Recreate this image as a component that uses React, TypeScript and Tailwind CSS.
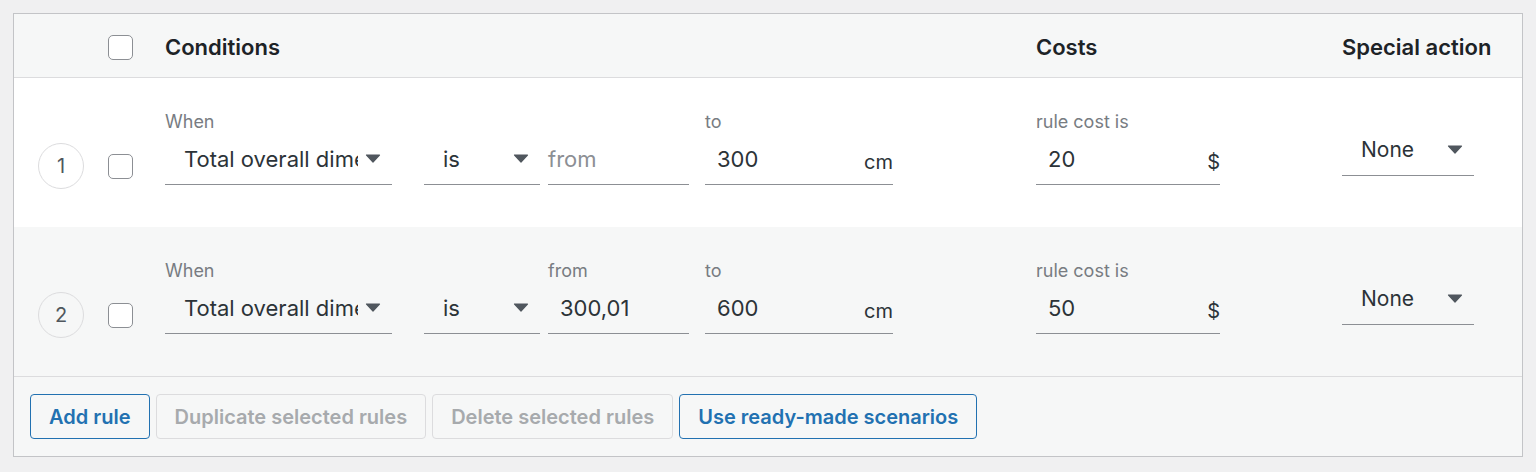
import React from "react";

type Rule = {
  id: number;
  from: string;
  to: string;
  cost: string;
  shaded: boolean;
};

const rules: Rule[] = [
  { id: 1, from: "", to: "300", cost: "20", shaded: false },
  { id: 2, from: "300,01", to: "600", cost: "50", shaded: true },
];

function Caret() {
  return (
    <svg width="16" height="9" viewBox="0 0 16 9" className="shrink-0">
      <path d="M1.5 1 L14.5 1 L8 8 Z" fill="#50575e" stroke="#50575e" strokeWidth="1.2" strokeLinejoin="round" />
    </svg>
  );
}

function Checkbox() {
  return <div className="h-[25px] w-[25px] rounded-[5px] border-[1.5px] border-[#8c8f94] bg-white" />;
}

function Label({ children }: { children?: React.ReactNode }) {
  return <div className="mb-2 h-[22px] text-[18px] leading-[22px] text-[#787c82]">{children}</div>;
}

function SelectBox({ value, width, clip }: { value: string; width: string; clip?: boolean }) {
  return (
    <div className={`flex h-[44px] items-center border-b border-[#8c8f94] pb-[8px] pl-[19px] pr-[11px] ${width}`}>
      <span
        className={`min-w-0 flex-1 whitespace-nowrap text-[22px] leading-[28px] text-[#2c3338] ${clip ? "mr-[7px] overflow-hidden" : ""}`}
      >
        {value}
      </span>
      <Caret />
    </div>
  );
}

function TextBox({
  value,
  placeholder,
  suffix,
  width,
}: {
  value: string;
  placeholder?: string;
  suffix?: string;
  width: string;
}) {
  return (
    <div className={`flex h-[44px] items-center border-b border-[#8c8f94] pb-[8px] ${width} ${value ? "pl-3" : "pl-0"}`}>
      <span className={`flex-1 text-[22px] leading-[28px] ${value ? "text-[#2c3338]" : "text-[#8c8f94]"}`}>
        {value || placeholder}
      </span>
      {suffix && <span className="mt-[6px] text-[20px] leading-[24px] text-[#2c3338]">{suffix}</span>}
    </div>
  );
}

function RuleRow({ rule }: { rule: Rule }) {
  return (
    <div className={`flex h-[149px] items-start pt-[33px] ${rule.shaded ? "bg-[#f6f7f7]" : "bg-white"}`}>
      <div className="mt-[33px] flex h-[44px] items-center pl-6">
        <div className="flex h-[46px] w-[46px] items-center justify-center rounded-full border border-[#dcdcde] text-[20px] text-[#50575e]">
          {rule.id}
        </div>
        <div className="ml-6 mr-8">
          <Checkbox />
        </div>
      </div>

      <div className="flex w-[871px] items-start">
        <div>
          <Label>When</Label>
          <SelectBox value="Total overall dimensions" width="w-[227px]" clip />
        </div>
        <div className="ml-8">
          <Label />
          <SelectBox value="is" width="w-[116px]" />
        </div>
        <div className="ml-2">
          <Label>{rule.from ? "from" : ""}</Label>
          <TextBox value={rule.from} placeholder="from" width="w-[141px]" />
        </div>
        <div className="ml-4">
          <Label>to</Label>
          <TextBox value={rule.to} suffix="cm" width="w-[188px]" />
        </div>
      </div>

      <div className="w-[306px]">
        <Label>rule cost is</Label>
        <TextBox value={rule.cost} suffix="$" width="w-[184px]" />
      </div>

      <div className="mt-[21px]">
        <div className="flex h-[44px] w-[132px] items-center border-b border-[#8c8f94] pb-[8px] pl-[19px] pr-[11px]">
          <span className="flex-1 text-[21px] leading-[26px] text-[#2c3338]">None</span>
          <Caret />
        </div>
      </div>
    </div>
  );
}

function Button({ children, disabled }: { children: React.ReactNode; disabled?: boolean }) {
  return (
    <button
      disabled={disabled}
      className={
        disabled
          ? "h-[45px] rounded-[4px] border border-[#dcdcde] bg-[#f6f7f7] px-[18px] text-[20px] font-semibold text-[#a7aaad]"
          : "h-[45px] rounded-[4px] border border-[#2271b1] bg-[#f6f7f7] px-[18px] text-[20px] font-semibold text-[#2271b1]"
      }
    >
      {children}
    </button>
  );
}

export default function App() {
  return (
    <div className="h-[472px] w-[1536px] bg-[#f0f0f1] px-[13px] pt-[13px] font-['Inter',sans-serif]">
      <div className="border border-[#c3c4c7] bg-white">
        <div className="flex h-[64px] items-center border-b border-[#dcdcde] bg-[#f6f7f7] pt-[3px] text-[22px] font-semibold text-[#1d2327]">
          <div className="ml-[94px] mr-8">
            <Checkbox />
          </div>
          <div className="w-[871px]">Conditions</div>
          <div className="w-[306px]">Costs</div>
          <div>Special action</div>
        </div>

        {rules.map((rule) => (
          <RuleRow key={rule.id} rule={rule} />
        ))}

        <div className="flex gap-1.5 border-t border-[#dcdcde] bg-[#f6f7f7] px-4 py-[17px]">
          <Button>Add rule</Button>
          <Button disabled>Duplicate selected rules</Button>
          <Button disabled>Delete selected rules</Button>
          <Button>Use ready-made scenarios</Button>
        </div>
      </div>
    </div>
  );
}
